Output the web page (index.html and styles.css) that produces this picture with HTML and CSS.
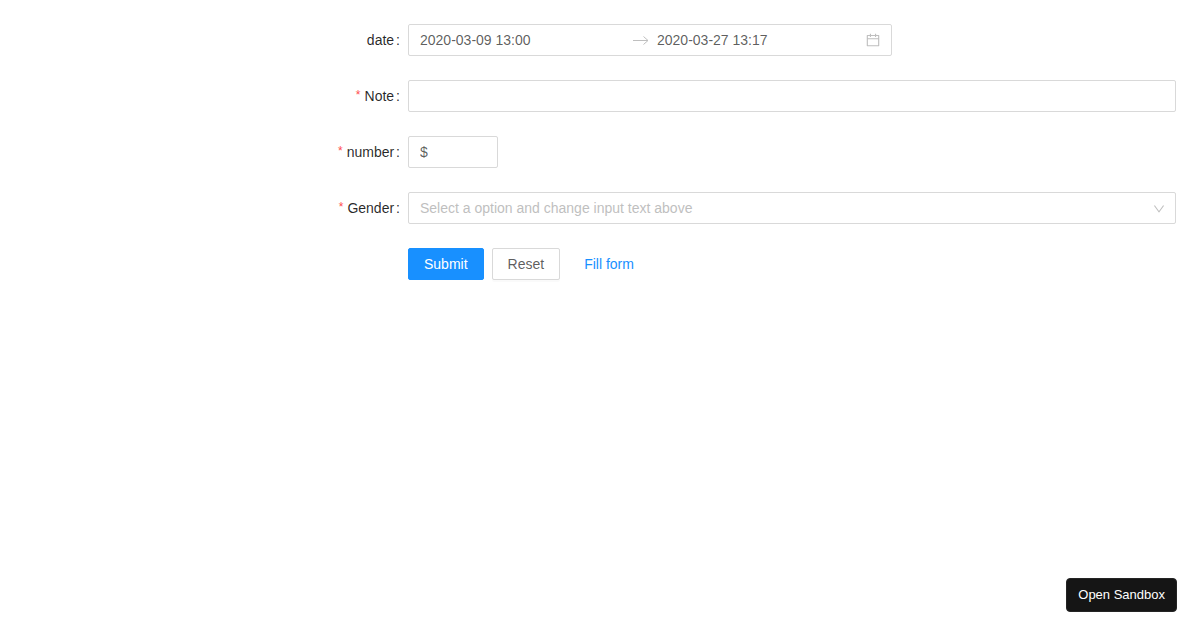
FILE: index.html
```html
<!DOCTYPE html>
<html lang="en">
<head>
<meta charset="utf-8">
<meta name="viewport" content="width=device-width, initial-scale=1">
<title>Form</title>
<link rel="stylesheet" href="styles.css">
</head>
<body>
<form class="form">
  <div class="row">
    <label class="label" for="date-start">date</label>
    <div class="control">
      <div class="range">
        <input class="range-input" id="date-start" type="text" value="2020-03-09 13:00">
        <svg class="range-arrow" viewBox="0 0 16 16" aria-hidden="true"><path d="M0 8.500H15M10.500 4.500L15 8.500L10.500 12.500"/></svg>
        <input class="range-input" type="text" value="2020-03-27 13:17" aria-label="End date">
        <svg class="range-icon" viewBox="64 64 896 896" aria-hidden="true"><path d="M880 184H712v-64c0-4.400-3.600-8-8-8h-56c-4.400 0-8 3.600-8 8v64H384v-64c0-4.400-3.600-8-8-8h-56c-4.400 0-8 3.600-8 8v64H144c-17.700 0-32 14.300-32 32v664c0 17.700 14.300 32 32 32h736c17.700 0 32-14.300 32-32V216c0-17.700-14.300-32-32-32zm-40 656H184V460h656v380zM184 392V256h128v48c0 4.400 3.600 8 8 8h56c4.400 0 8-3.600 8-8v-48h256v48c0 4.400 3.600 8 8 8h56c4.400 0 8-3.600 8-8v-48h128v136H184z"/></svg>
      </div>
    </div>
  </div>
  <div class="row">
    <label class="label required" for="note">Note</label>
    <div class="control"><input class="field" id="note" type="text"></div>
  </div>
  <div class="row">
    <label class="label required" for="number">number</label>
    <div class="control"><input class="field field-number" id="number" type="text" value="$ "></div>
  </div>
  <div class="row">
    <label class="label required" for="gender">Gender</label>
    <div class="control select-wrap">
      <select class="field select" id="gender">
        <option value="" selected>Select a option and change input text above</option>
        <option>male</option>
        <option>female</option>
        <option>other</option>
      </select>
      <svg class="select-icon" viewBox="64 64 896 896" aria-hidden="true"><path d="M884 256h-75c-5.100 0-9.900 2.500-12.900 6.600L512 654.200 227.900 262.600c-3-4.100-7.800-6.600-12.900-6.600h-75c-6.500 0-10.300 7.400-6.500 12.700l352.600 486.100c12.800 17.600 39 17.600 51.700 0l352.600-486.100c3.900-5.300.1-12.700-6.400-12.700z"/></svg>
    </div>
  </div>
  <div class="row">
    <div class="control actions">
      <button class="button button-primary" type="submit">Submit</button>
      <button class="button" type="reset">Reset</button>
      <button class="button button-link" type="button">Fill form</button>
    </div>
  </div>
</form>
<button class="sandbox" type="button">Open Sandbox</button>
</body>
</html>
```
FILE: styles.css
```css
* {
  box-sizing: border-box;
}

body {
  margin: 0;
  padding: 24px;
  background: #fff;
  color: rgba(0, 0, 0, 0.85);
  font: 14px/22px "Liberation Sans", Arial, sans-serif;
}

input,
select,
button {
  font: inherit;
}

.form {
  display: flex;
  flex-direction: column;
  gap: 24px;
}

.row {
  display: grid;
  grid-template-columns: 1fr 2fr;
}

.label {
  padding-right: 8px;
  line-height: 32px;
  text-align: right;
}

.label::after {
  content: ":";
  margin-left: 2px;
}

.required::before {
  content: "*";
  margin-right: 4px;
  color: #ff4d4f;
  font-size: 12px;
  line-height: 1;
  vertical-align: 2px;
}

.control {
  grid-column: 2;
  min-width: 0;
}

.field,
.range {
  width: 100%;
  height: 32px;
  padding: 4px 11px;
  border: 1px solid #d9d9d9;
  border-radius: 2px;
  background: #fff;
  color: rgba(0, 0, 0, 0.65);
}

.field {
  display: block;
}

.field-number {
  width: 90px;
}

.range {
  display: flex;
  align-items: center;
  max-width: 484px;
}

.range-input {
  flex: 1;
  min-width: 0;
  padding: 0;
  border: 0;
  outline: 0;
  background: transparent;
  color: inherit;
}

.range-arrow {
  width: 16px;
  height: 16px;
  margin: 0 8px 0 4px;
  fill: none;
  stroke: #bfbfbf;
}

.range-icon {
  width: 14px;
  height: 14px;
  fill: #bfbfbf;
}

.select-wrap {
  position: relative;
}

.select {
  appearance: none;
  color: #bfbfbf;
}

.select-icon {
  position: absolute;
  top: 11px;
  right: 11px;
  width: 12px;
  height: 12px;
  fill: #bfbfbf;
  pointer-events: none;
}

.actions {
  display: flex;
  gap: 8px;
}

.button {
  height: 32px;
  padding: 0 15px;
  border: 1px solid #d9d9d9;
  border-radius: 2px;
  background: #fff;
  box-shadow: 0 2px 0 rgba(0, 0, 0, 0.02);
  color: rgba(0, 0, 0, 0.65);
  cursor: pointer;
}

.button-primary {
  border-color: #1890ff;
  background: #1890ff;
  box-shadow: none;
  color: #fff;
}

.button-link {
  border-color: transparent;
  background: transparent;
  box-shadow: none;
  color: #1890ff;
}

.sandbox {
  position: fixed;
  right: 23px;
  bottom: 18px;
  height: 34px;
  padding: 0 11px;
  border: 1px solid #242424;
  border-radius: 4px;
  background: #151515;
  color: #fff;
  font-size: 13px;
  cursor: pointer;
}
```
